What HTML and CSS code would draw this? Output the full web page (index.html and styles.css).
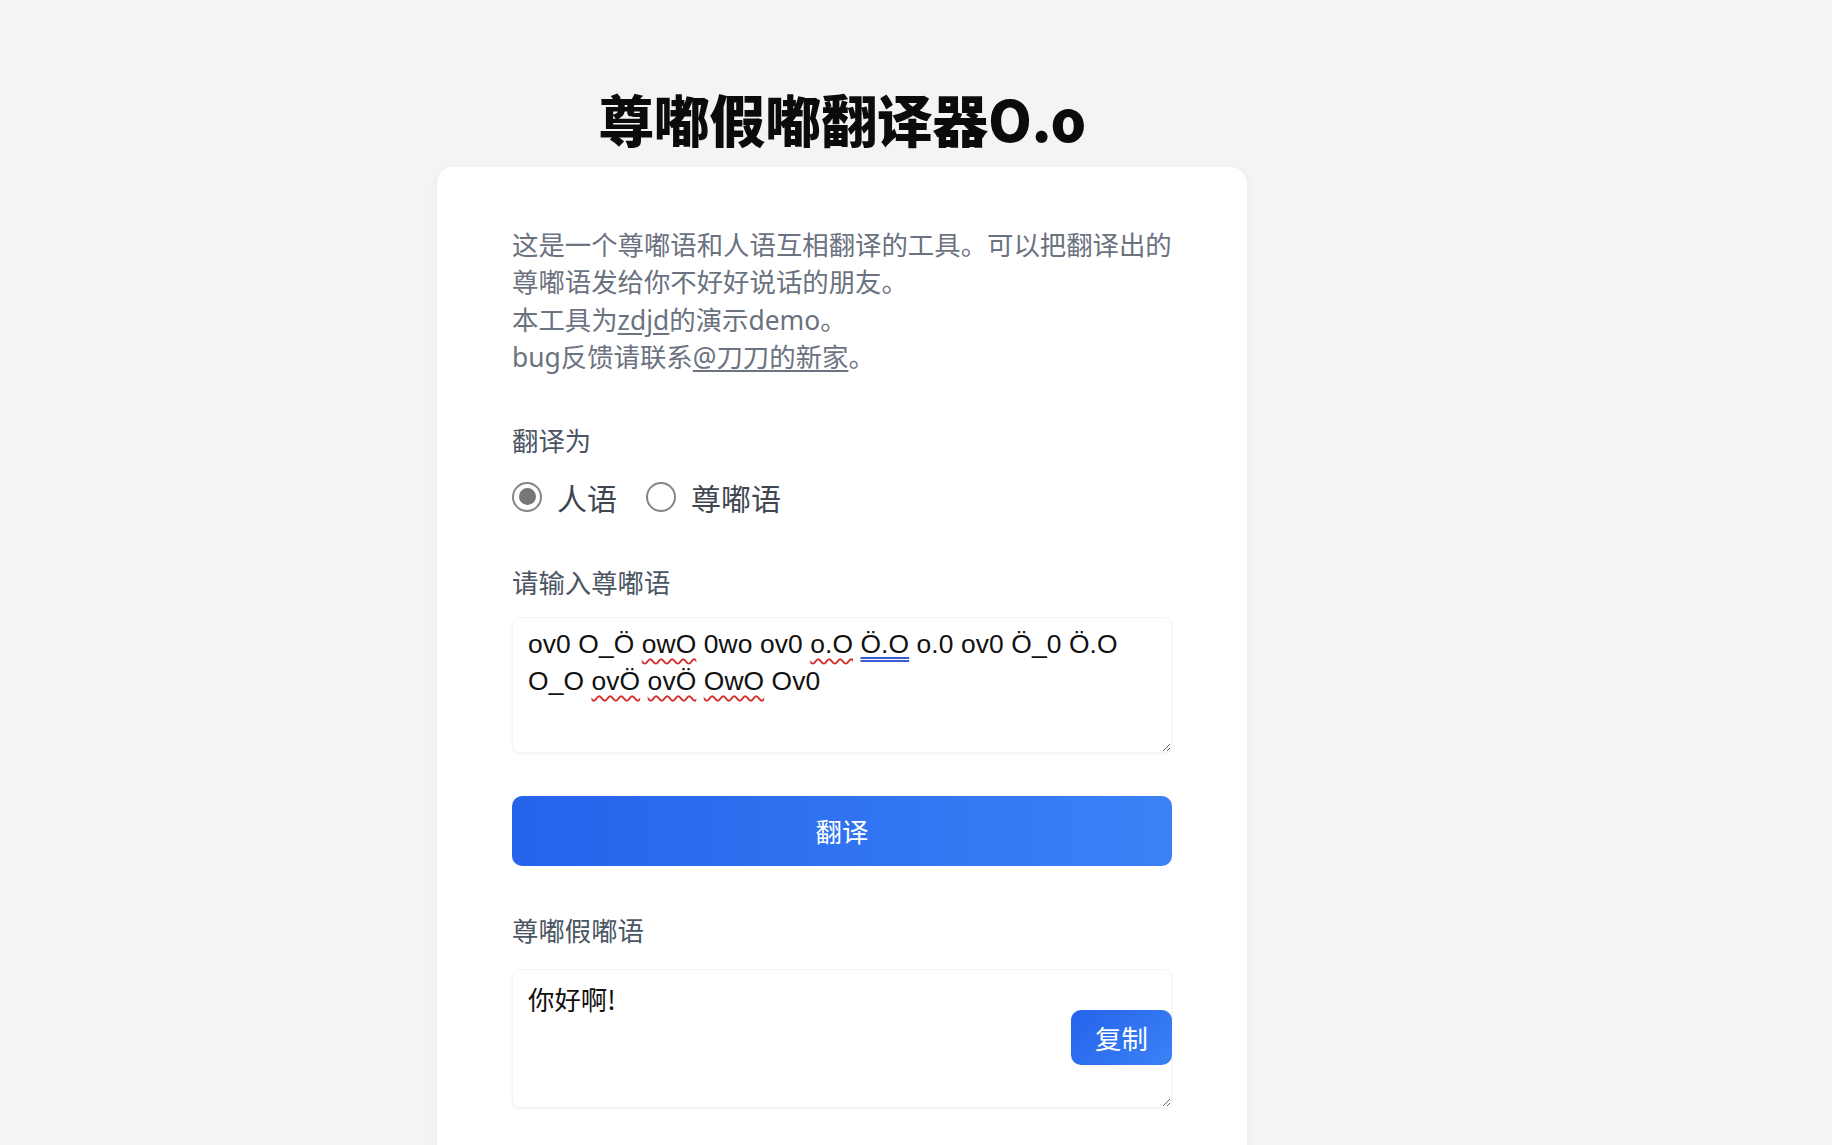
FILE: index.html
```html
<!DOCTYPE html>
<html lang="zh-CN">
<head>
<meta charset="utf-8">
<title>尊嘟假嘟翻译器O.o</title>
<link rel="stylesheet" href="styles.css">
</head>
<body>
<div class="page">
  <h1 class="title">尊嘟假嘟翻译器O.o</h1>
  <main class="card">
    <p class="desc">这是一个尊嘟语和人语互相翻译的工具。可以把翻译出的尊嘟语发给你不好好说话的朋友。<br>本工具为<a href="#">zdjd</a>的演示demo。<br>bug反馈请联系<a href="#">@刀刀的新家</a>。</p>

    <section class="group">
      <div class="label">翻译为</div>
      <div class="radios">
        <label class="radio"><span class="dot checked"></span><span>人语</span></label>
        <label class="radio"><span class="dot"></span><span>尊嘟语</span></label>
      </div>
    </section>

    <section class="group">
      <div class="label">请输入尊嘟语</div>
      <div class="area input">ov0 O_Ö <span class="sp">owO</span> 0wo ov0 <span class="sp">o.O</span> <span class="gr">Ö.O</span> o.0 ov0 Ö_0 Ö.O O_O <span class="sp">ovÖ</span> <span class="sp">ovÖ</span> <span class="sp">OwO</span> Ov0</div>
    </section>

    <button class="btn translate">翻译</button>

    <section class="group result">
      <div class="label">尊嘟假嘟语</div>
      <div class="out-wrap">
        <div class="area output">你好啊!</div>
        <button class="btn copy">复制</button>
      </div>
    </section>
  </main>
</div>
</body>
</html>
```

FILE: styles.css
```css
html, body {
  margin: 0;
  padding: 0;
}
body {
  background: #f3f4f6;
  font-family: "Noto Sans", "Noto Sans CJK SC", sans-serif;
  color: #111;
  height: 1145px;
  overflow: hidden;
}
.page {
  width: 810px;
  margin-left: 437px;
}
.title {
  margin: 0;
  padding-top: 84px;
  height: 68px;
  line-height: 68px;
  font-size: 56px;
  font-weight: 900;
  text-align: center;
  color: #0b0b0b;
  font-family: "Noto Sans CJK SC", "Noto Sans", sans-serif;
  letter-spacing: -0.3px;
}
.card {
  margin-top: 15px;
  background: #fff;
  border-radius: 16px;
  box-shadow: 0 2px 10px rgba(0, 0, 0, 0.05);
  padding: 60px 75px 60px;
  min-height: 1000px;
  box-sizing: border-box;
}
.desc {
  margin: 0;
  font-size: 26.4px;
  line-height: 37.4px;
  color: #6b7280;
}
.desc a {
  color: #6b7280;
  text-decoration: underline;
  text-underline-offset: 3px;
}
.group {
  margin-top: 46px;
}
.group.result {
  margin-top: 47px;
}
.label {
  font-size: 26.4px;
  line-height: 37px;
  color: #4b5563;
  margin-bottom: 15px;
}
.radios {
  display: flex;
  gap: 29px;
  align-items: center;
  height: 44px;
}
.radio {
  display: flex;
  align-items: center;
  gap: 15px;
  font-size: 30px;
  color: #3f4650;
}
.dot {
  width: 30px;
  height: 30px;
  border: 2px solid #858585;
  border-radius: 50%;
  box-sizing: border-box;
  display: inline-flex;
  align-items: center;
  justify-content: center;
  background: #fff;
}
.dot.checked::after {
  content: "";
  width: 17px;
  height: 17px;
  border-radius: 50%;
  background: #767676;
}
.area {
  box-sizing: border-box;
  width: 660px;
  border: 1px solid #f3f4f6;
  border-radius: 8px;
  box-shadow: 0 1px 3px rgba(0, 0, 0, 0.05);
  padding: 8px 15px;
  font-family: "Liberation Sans", "Noto Sans CJK SC", sans-serif;
  font-size: 26.4px;
  line-height: 37.4px;
  color: #111;
  resize: vertical;
  overflow: auto;
  background: #fff;
}
.input {
  height: 136px;
  letter-spacing: 0.1px;
}
.output {
  height: 139px;
  padding-top: 10px;
  font-family: "Noto Sans CJK SC", sans-serif;
}
.sp {
  text-decoration: underline wavy #d32f2f;
  text-decoration-thickness: 1.5px;
  text-underline-offset: 5px;
}
.gr {
  text-decoration: underline double #3b5bdb;
  text-decoration-thickness: 1.5px;
  text-underline-offset: 4px;
}
.btn {
  border: none;
  color: #fff;
  font-family: "Noto Sans CJK SC", "Noto Sans", sans-serif;
  font-size: 26.4px;
  cursor: pointer;
}
.translate {
  display: block;
  margin-top: 43px;
  width: 660px;
  height: 70px;
  border-radius: 10px;
  background: linear-gradient(90deg, #2563eb, #3b82f6);
}
.out-wrap {
  position: relative;
  width: 660px;
  margin-top: 19px;
}
.copy {
  position: absolute;
  right: 0;
  top: 41px;
  width: 101px;
  height: 55px;
  border-radius: 10px;
  background: linear-gradient(135deg, #2563eb, #3b82f6);
}
```
